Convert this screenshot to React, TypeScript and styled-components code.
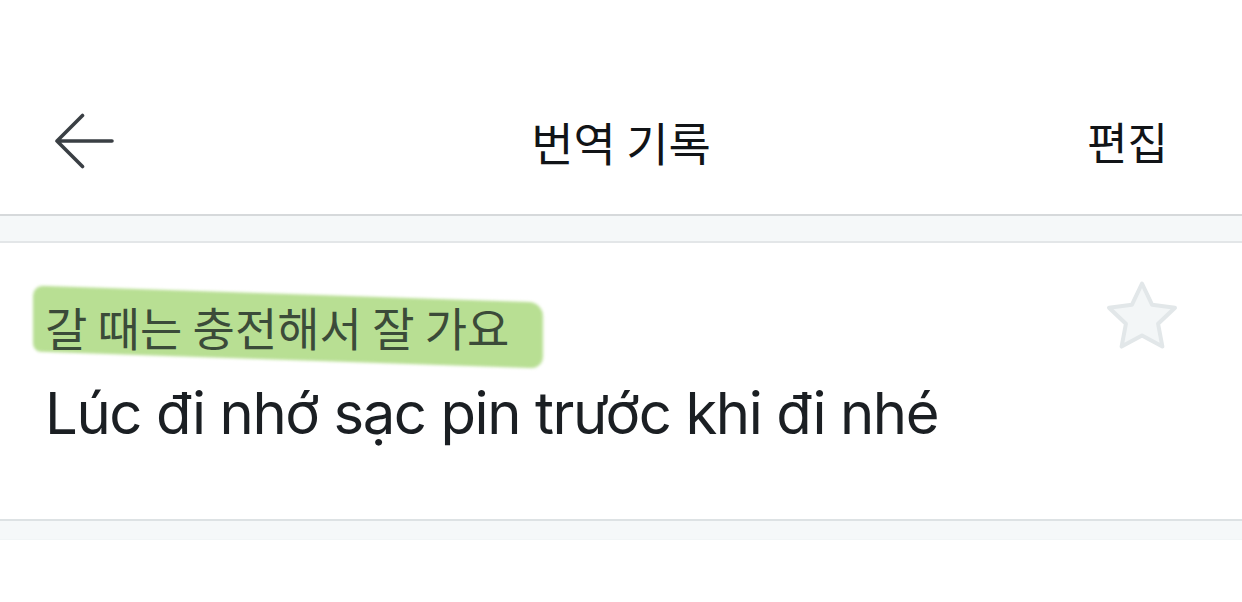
import styled, { createGlobalStyle } from "styled-components";

const GlobalStyle = createGlobalStyle`
  html, body {
    margin: 0;
    padding: 0;
    background: #ffffff;
  }
  body {
    font-family: Inter, "Noto Sans CJK KR", sans-serif;
  }
`;

const Screen = styled.div`
  width: 1242px;
  height: 602px;
  background: #ffffff;
  overflow: hidden;
`;

const Header = styled.header`
  display: grid;
  grid-template-columns: 1fr auto 1fr;
  align-items: center;
  height: 214px;
  padding: 68px 54px 0 54px;
  box-sizing: border-box;
`;

const BackButton = styled.button`
  justify-self: start;
  display: flex;
  align-items: center;
  justify-content: center;
  width: 60px;
  height: 56px;
  padding: 0;
  border: none;
  background: none;
`;

const Title = styled.h1`
  margin: 0;
  font-family: "Noto Sans CJK KR", sans-serif;
  font-weight: 400;
  font-size: 46px;
  line-height: 56px;
  color: #111417;
`;

const EditButton = styled.button`
  justify-self: end;
  margin-right: 20px;
  padding: 0;
  border: none;
  background: none;
  font-family: "Noto Sans CJK KR", sans-serif;
  font-size: 44px;
  line-height: 56px;
  color: #111417;
`;

const Band = styled.div<{ $top: string; $bottom: string; $height: number; $edge: number }>`
  height: ${(p) => p.$height}px;
  background: #f5f8f9;
  border-top: 2px solid ${(p) => p.$top};
  border-bottom: ${(p) => p.$edge}px solid ${(p) => p.$bottom};
`;

const Item = styled.div`
  display: flex;
  justify-content: space-between;
  align-items: flex-start;
  height: 276px;
  padding: 37px 62px 0 45px;
  box-sizing: border-box;
`;

const Texts = styled.div`
  display: flex;
  flex-direction: column;
  padding-top: 14px;
`;

const Source = styled.span`
  position: relative;
  align-self: flex-start;
  font-family: "Noto Sans CJK KR", sans-serif;
  font-size: 46px;
  line-height: 64px;
  color: #3b4b39;
  z-index: 0;

  &::before {
    content: "";
    position: absolute;
    left: -12px;
    right: -34px;
    top: 0;
    bottom: -2px;
    background: #b8df93;
    border-radius: 10px 14px 12px 8px;
    transform: skewY(1.9deg);
    filter: blur(1.5px);
    z-index: -1;
  }
`;

const Target = styled.div`
  margin-top: 20px;
  font-family: Inter, sans-serif;
  font-size: 58px;
  line-height: 70px;
  letter-spacing: -1.4px;
  color: #1b1f23;
`;

const StarButton = styled.button`
  padding: 0;
  border: none;
  background: none;
  width: 76px;
  height: 72px;
`;

export default function App() {
  return (
    <Screen>
      <GlobalStyle />
      <Header>
        <BackButton aria-label="뒤로">
          <svg width="60" height="56" viewBox="0 0 60 56" fill="none">
            <path
              d="M58 28H3M28.5 2.5L3 28l25.5 25.5"
              stroke="#3a3f44"
              strokeWidth="3.6"
              strokeLinecap="round"
              strokeLinejoin="round"
            />
          </svg>
        </BackButton>
        <Title>번역 기록</Title>
        <EditButton>편집</EditButton>
      </Header>
      <Band $top="#d6d9db" $bottom="#e3e6e8" $height={25} $edge={2} />
      <Item>
        <Texts>
          <Source>갈 때는 충전해서 잘 가요</Source>
          <Target>Lúc đi nhớ sạc pin trước khi đi nhé</Target>
        </Texts>
        <StarButton aria-label="즐겨찾기">
          <svg width="76" height="72" viewBox="0 0 76 72">
            <path
              d="M38 3.5l10 21.2 23 3-16.9 16.1 4.3 22.8L38 55.4 17.6 66.6l4.3-22.8L5 27.7l23-3z"
              fill="#f3f6f7"
              stroke="#e2e7e9"
              strokeWidth="4"
              strokeLinejoin="round"
            />
          </svg>
        </StarButton>
      </Item>
      <Band $top="#dde2e4" $bottom="#f1f5f6" $height={18} $edge={1} />
    </Screen>
  );
}
